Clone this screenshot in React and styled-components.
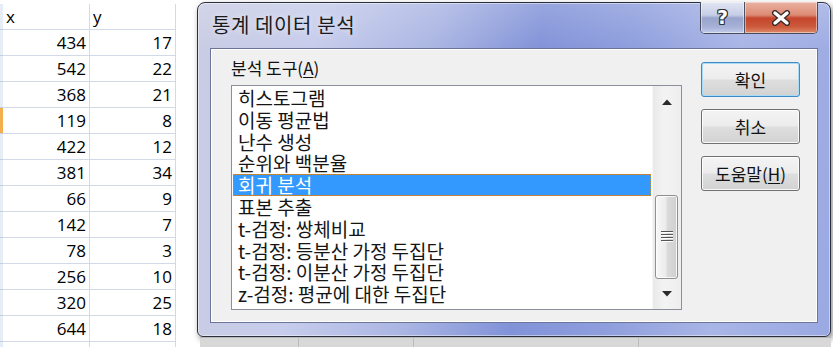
import React from 'react';
import styled, { createGlobalStyle } from 'styled-components';

const Global = createGlobalStyle`
  html, body { margin: 0; padding: 0; background: #fff; }
  body {
    width: 833px; height: 347px; overflow: hidden;
    font-family: "Noto Sans CJK KR", "Noto Sans", sans-serif;
  }
`;

const Page = styled.div`
  display: flex;
  align-items: flex-start;
  width: 833px;
  height: 347px;
  overflow: hidden;
`;

/* ---------- spreadsheet ---------- */
const Sheet = styled.div`
  display: grid;
  grid-template-columns: 3px 87px 86px;
  margin-top: 4px;
  flex: none;
`;

const Stub = styled.div`
  height: 26px;
  box-sizing: border-box;
  background: ${p => (p.$active ? '#f5ae4c' : '#e6edf7')};
  border-bottom: 1px solid #c3cfe2;
`;

const Cell = styled.div`
  height: 26px;
  box-sizing: border-box;
  border-right: 1px solid #d3dae7;
  border-bottom: 1px solid #d3dae7;
  padding: 0 3px 0 3px;
  font: 17px/25px "Open Sans", "Noto Sans", sans-serif;
  color: #000;
  text-align: ${p => (p.$num ? 'right' : 'left')};
`;

/* ---------- dialog ---------- */
const Right = styled.div`
  display: flex;
  flex-direction: column;
  margin-left: 21px;
  margin-top: 2px;
  flex: none;
`;

const Window = styled.div`
  width: 634px;
  height: 335px;
  box-sizing: border-box;
  border: 1px solid #2c303c;
  border-radius: 8px 8px 6px 6px;
  padding: 0 12px 13px 12px;
  display: flex;
  flex-direction: column;
  background:
    linear-gradient(180deg, rgba(255,255,255,0.18) 0%, rgba(255,255,255,0) 14%),
    linear-gradient(96deg, #c9cce3 0%, #c6cceb 18%, #aab5e3 36%, #8192d8 52%, #8e9edd 66%, #a9b5e6 82%, #9aa9e2 100%);
  box-shadow: inset 0 0 0 1px rgba(255,255,255,0.45), 2px 3px 6px rgba(0,0,0,0.45);
`;

const TitleBar = styled.div`
  display: flex;
  align-items: flex-start;
  height: 45px;
  flex: none;
`;

const Title = styled.div`
  margin: 9px 0 0 2px;
  font-size: 20px;
  letter-spacing: 0.6px;
  line-height: 26px;
  height: 26px;
  color: #1b1b1b;
  text-shadow: 0 0 6px rgba(255,255,255,0.7);
`;

const Caption = styled.div`
  display: flex;
  margin-left: auto;
  margin-top: -1px;
  height: 31px;
  border: 1px solid #474c5c;
  border-top: none;
  border-radius: 0 0 5px 5px;
  overflow: hidden;
`;

const CapBtn = styled.div`
  width: ${p => p.$w}px;
  display: flex;
  align-items: center;
  justify-content: center;
  box-shadow: inset 0 0 0 1px rgba(255,255,255,0.45);
  background: ${p =>
    p.$close
      ? 'linear-gradient(180deg, #eab2a2 0%, #dc8b74 42%, #c5452d 52%, #cc5a3c 80%, #de8a6a 100%)'
      : 'linear-gradient(180deg, #e2e6f3 0%, #c6cde6 42%, #98a4cb 52%, #a6b1d8 80%, #c2cbea 100%)'};
  & + & { border-left: 1px solid #4d5161; }
`;

const Help = styled.span`
  font: bold 19px/1 "DejaVu Sans", sans-serif;
  color: #fff;
  text-shadow: -1px 0 #333, 1px 0 #333, 0 -1px #333, 0 1px #333, 1px 1px #333, -1px -1px #333, 1px -1px #333, -1px 1px #333;
`;

const Client = styled.div`
  flex: 1;
  display: flex;
  gap: 19px;
  padding: 11px 17px 0 20px;
  background: #f0f0f0;
  border: 1px solid #6b7599;
  box-shadow: inset 0 0 0 1px #ffffff;
`;

const Column = styled.div`
  display: flex;
  flex-direction: column;
`;

const Label = styled.div`
  height: 25px;
  font-size: 17px;
  line-height: 15px;
  color: #111;
`;

const U = styled.span`
  text-decoration: underline;
  text-underline-offset: 2px;
`;

const ListBox = styled.div`
  width: 451px;
  height: 225px;
  box-sizing: border-box;
  border: 1px solid #8a8f99;
  background: #fff;
  display: flex;
`;

const Items = styled.div`
  flex: 1;
  padding: 1px 1px 0 1px;
`;

const Item = styled.div`
  height: 21.8px;
  box-sizing: border-box;
  padding-left: 4px;
  font-size: 19px;
  line-height: 19.8px;
  white-space: nowrap;
  color: ${p => (p.$sel ? '#fff' : '#151515')};
  background: ${p => (p.$sel ? '#3399ff' : 'transparent')};
  border: 1px dotted ${p => (p.$sel ? '#c9893b' : 'transparent')};
`;

const ScrollBar = styled.div`
  width: 28px;
  display: flex;
  flex-direction: column;
  background: linear-gradient(90deg, #e9e9e9 0%, #f3f3f3 40%, #eeeeee 100%);
  border-left: 1px solid #f7f7f7;
`;

const Arrow = styled.div`
  height: 29px;
  display: flex;
  justify-content: center;
  align-items: ${p => (p.$down ? 'flex-start' : 'flex-end')};
  padding: ${p => (p.$down ? '11px 0 0' : '0 0 10px')};
  box-sizing: border-box;
`;

const Track = styled.div`
  flex: 1;
  display: flex;
  flex-direction: column;
  padding: 0 3px 0 2px;
`;

const Thumb = styled.div`
  margin-top: 80px;
  height: 84px;
  box-sizing: border-box;
  border: 1px solid #8f9092;
  border-radius: 3px;
  background: linear-gradient(90deg, #f7f7f7 0%, #ececec 45%, #dadada 55%, #cfcfcf 100%);
  box-shadow: inset 0 0 0 1px rgba(255,255,255,0.8);
  display: flex;
  align-items: center;
  justify-content: center;
`;

const Buttons = styled.div`
  display: flex;
  flex-direction: column;
  gap: 12px;
  padding-top: 2px;
`;

const Button = styled.div`
  width: 99px;
  height: 35px;
  box-sizing: border-box;
  border: 1px solid ${p => (p.$def ? '#3d8ac4' : '#707070')};
  border-radius: 3px;
  display: flex;
  align-items: center;
  justify-content: center;
  font-size: 17px;
  color: #111;
  background: linear-gradient(180deg, #f4f4f4 0%, #ececec 48%, #dedede 52%, #d2d2d2 100%);
  box-shadow: inset 0 0 0 1px ${p => (p.$def ? '#a8dcf6' : 'rgba(255,255,255,0.85)')};
`;

const Strip = styled.div`
  display: flex;
  height: 10px;
  margin-left: 3px;
  box-sizing: border-box;
  background: #d8d8d8;
  border-top: 1px solid #b8b8b8;
`;

const StripCell = styled.div`
  width: ${p => p.$w}px;
  flex: none;
  border-right: 1px solid #bcbcbc;
`;

const data = [
  [434, 17], [542, 22], [368, 21], [119, 8], [422, 12], [381, 34],
  [66, 9], [142, 7], [78, 3], [256, 10], [320, 25], [644, 18], ['', ''],
];

const tools = [
  '히스토그램',
  '이동 평균법',
  '난수 생성',
  '순위와 백분율',
  '회귀 분석',
  '표본 추출',
  't-검정: 쌍체비교',
  't-검정: 등분산 가정 두집단',
  't-검정: 이분산 가정 두집단',
  'z-검정: 평균에 대한 두집단',
];

const UpIcon = () => (
  <svg width="10" height="6" viewBox="0 0 10 6"><path d="M0 6 L5 0.5 L10 6 Z" fill="#2b2b2b" /></svg>
);
const DownIcon = () => (
  <svg width="10" height="6" viewBox="0 0 10 6"><path d="M0 0 L10 0 L5 5.5 Z" fill="#2b2b2b" /></svg>
);
const Grip = () => (
  <svg width="12" height="12" viewBox="0 0 12 12">
    {[1, 4, 7, 10].map(y => (
      <g key={y}>
        <rect x="0" y={y - 1} width="12" height="1" fill="#555" />
        <rect x="1" y={y} width="11" height="1" fill="#fff" />
      </g>
    ))}
  </svg>
);
const CloseIcon = () => (
  <svg width="20" height="16" viewBox="0 0 20 16">
    <path d="M4 3 L16 13 M16 3 L4 13" stroke="#3a2a2a" strokeWidth="6" strokeLinecap="round" />
    <path d="M4 3 L16 13 M16 3 L4 13" stroke="#ffffff" strokeWidth="3.4" strokeLinecap="round" />
  </svg>
);

export default function App() {
  return (
    <>
      <Global />
      <Page>
        <Sheet>
          <Stub />
          <Cell>x</Cell>
          <Cell>y</Cell>
          {data.map(([a, b], i) => (
            <React.Fragment key={i}>
              <Stub $active={i === 3} />
              <Cell $num>{a}</Cell>
              <Cell $num>{b}</Cell>
            </React.Fragment>
          ))}
        </Sheet>
        <Right>
          <Window>
            <TitleBar>
              <Title>통계 데이터 분석</Title>
              <Caption>
                <CapBtn $w={43}><Help>?</Help></CapBtn>
                <CapBtn $w={72} $close><CloseIcon /></CapBtn>
              </Caption>
            </TitleBar>
            <Client>
              <Column>
                <Label>분석 도구(<U>A</U>)</Label>
                <ListBox>
                  <Items>
                    {tools.map((t, i) => (
                      <Item key={t} $sel={i === 4}>{t}</Item>
                    ))}
                  </Items>
                  <ScrollBar>
                    <Arrow><UpIcon /></Arrow>
                    <Track>
                      <Thumb><Grip /></Thumb>
                    </Track>
                    <Arrow $down><DownIcon /></Arrow>
                  </ScrollBar>
                </ListBox>
              </Column>
              <Buttons>
                <Button $def>확인</Button>
                <Button>취소</Button>
                <Button>도움말(<U>H</U>)</Button>
              </Buttons>
            </Client>
          </Window>
          <Strip>
            <StripCell $w={98} />
            <StripCell $w={114} />
            <StripCell $w={224} />
          </Strip>
        </Right>
      </Page>
    </>
  );
}
